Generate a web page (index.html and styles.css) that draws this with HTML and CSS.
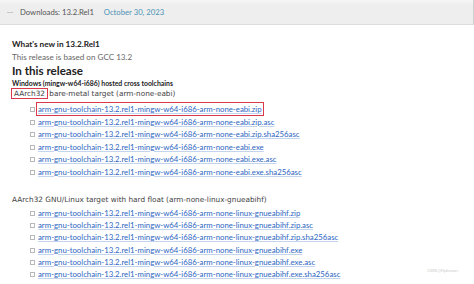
FILE: index.html
```html
<!DOCTYPE html>
<html>
<head>
<meta charset="utf-8">
<link rel="stylesheet" href="styles.css">
</head>
<body>
<div class="topbar">
  <span class="dash"></span>
  <span class="crumb">Downloads: 13.2.Rel1</span>
  <span class="date">October 30, 2023</span>
</div>
<div class="content">
  <div class="whatsnew">What's new in 13.2.Rel1</div>
  <div class="based">This release is based on GCC 13.2</div>
  <div class="inrel">In this release</div>
  <div class="hosted">Windows (mingw-w64-i686) hosted cross toolchains</div>
  <div class="target"><span class="boxed">AArch32</span> bare-metal target (arm-none-eabi)</div>
  <ul class="links">
    <li><a class="boxed-link">arm-gnu-toolchain-13.2.rel1-mingw-w64-i686-arm-none-eabi.zip</a></li>
    <li><a>arm-gnu-toolchain-13.2.rel1-mingw-w64-i686-arm-none-eabi.zip.asc</a></li>
    <li><a>arm-gnu-toolchain-13.2.rel1-mingw-w64-i686-arm-none-eabi.zip.sha256asc</a></li>
    <li><a>arm-gnu-toolchain-13.2.rel1-mingw-w64-i686-arm-none-eabi.exe</a></li>
    <li><a>arm-gnu-toolchain-13.2.rel1-mingw-w64-i686-arm-none-eabi.exe.asc</a></li>
    <li><a>arm-gnu-toolchain-13.2.rel1-mingw-w64-i686-arm-none-eabi.exe.sha256asc</a></li>
  </ul>
  <div class="target target2">AArch32 GNU/Linux target with hard float (arm-none-linux-gnueabihf)</div>
  <ul class="links links2">
    <li><a>arm-gnu-toolchain-13.2.rel1-mingw-w64-i686-arm-none-linux-gnueabihf.zip</a></li>
    <li><a>arm-gnu-toolchain-13.2.rel1-mingw-w64-i686-arm-none-linux-gnueabihf.zip.asc</a></li>
    <li><a>arm-gnu-toolchain-13.2.rel1-mingw-w64-i686-arm-none-linux-gnueabihf.zip.sha256asc</a></li>
    <li><a>arm-gnu-toolchain-13.2.rel1-mingw-w64-i686-arm-none-linux-gnueabihf.exe</a></li>
    <li><a>arm-gnu-toolchain-13.2.rel1-mingw-w64-i686-arm-none-linux-gnueabihf.exe.asc</a></li>
    <li><a>arm-gnu-toolchain-13.2.rel1-mingw-w64-i686-arm-none-linux-gnueabihf.exe.sha256asc</a></li>
  </ul>
</div>
<div class="watermark">CSDN @Flydreamer</div>
</body>
</html>
```
FILE: styles.css
```css
html, body {
  margin: 0;
  padding: 0;
  background: #ffffff;
  width: 474px;
  height: 284px;
  overflow: hidden;
  font-family: Lato, "Noto Sans", sans-serif;
  position: relative;
}
.topbar {
  height: 25px;
  box-sizing: border-box;
  background: linear-gradient(#f6f6f6 0, #eeeeee 5px, #eeeeee 100%);
  border-bottom: 1px solid #dddddd;
  border-right: 1px solid #d0d0d0;
  display: flex;
  align-items: center;
  padding-left: 7px;
  font-size: 7.7px;
}
.dash {
  width: 6px;
  height: 1px;
  background: #c8c8c8;
  margin-right: 7px;
}
.crumb {
  color: #555555;
}
.date {
  color: #4b93b5;
  margin-left: 10px;
}
.content {
  padding-left: 12px;
  padding-top: 13px;
}
.whatsnew {
  font-weight: bold;
  font-size: 8.2px;
  color: #222222;
  line-height: 13px;
}
.based {
  font-size: 8.1px;
  color: #666666;
  line-height: 12px;
}
.inrel {
  font-weight: bold;
  font-size: 11.6px;
  color: #222222;
  line-height: 15px;
}
.hosted {
  font-weight: bold;
  font-size: 6.9px;
  color: #222222;
  line-height: 10px;
}
.target {
  font-family: "DejaVu Sans", sans-serif;
  font-size: 7.3px;
  color: #444444;
  line-height: 12px;
}
.boxed {
  outline: 1px solid #d9394a;
  outline-offset: 0px;
  padding: 0 2px;
}
.links {
  list-style: none;
  margin: 3px 0 0 0;
  padding: 0 0 0 18px;
}
.links li {
  line-height: 12.5px;
  font-size: 7.8px;
  position: relative;
  padding-left: 8px;
}
.links li::before {
  content: "";
  position: absolute;
  left: 0;
  top: 4px;
  width: 3px;
  height: 3px;
  border: 1px solid #b8b8b8;
}
.links a {
  color: #2d66c2;
  text-decoration: underline;
  text-decoration-color: #c4d4ee;
  text-underline-offset: 1px;
}
.boxed-link {
  outline: 1px solid #d9394a;
  outline-offset: 1px;
}
.target2 {
  margin-top: 16px;
}
.links2 {
  margin-top: 1px;
}
.links2 li {
  line-height: 12.2px;
}
.watermark {
  position: absolute;
  right: 16px;
  bottom: 11px;
  font-size: 3.5px;
  color: #c8c8c8;
}
```
